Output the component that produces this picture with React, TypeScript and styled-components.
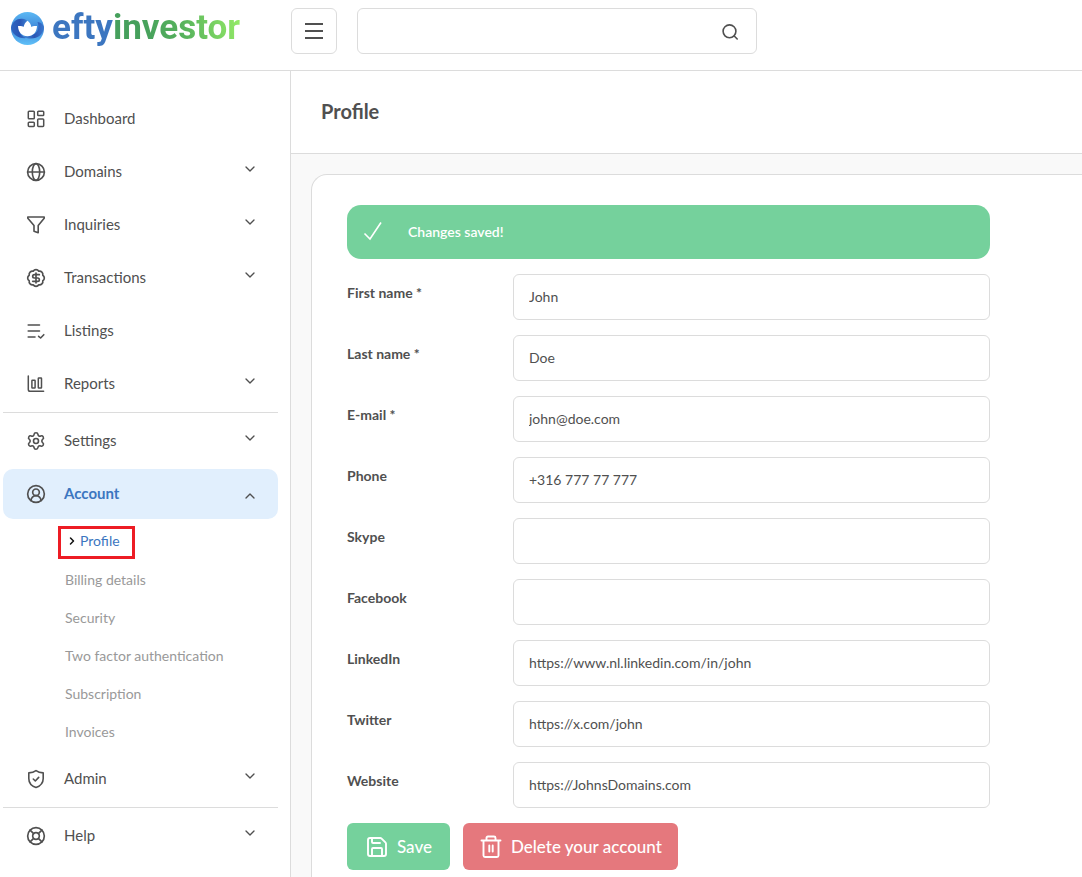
import React from 'react';
import styled, { createGlobalStyle, css } from 'styled-components';
import {
  BadgeDollarSign,
  ChevronDown,
  ChevronRight,
  ChevronUp,
  CircleUserRound,
  LifeBuoy,
  Save,
  Settings,
} from 'lucide-react';

const colors = {
  text: '#505050',
  muted: '#999999',
  line: '#dcdcdc',
  blue: '#3c76c0',
  green: '#75d19c',
  red: '#e5787d',
};

const GlobalStyle = createGlobalStyle`
  *, *::before, *::after { box-sizing: border-box; }
  body {
    margin: 0;
    background: #fff;
    color: ${colors.text};
    font-family: Lato, 'Open Sans', sans-serif;
    font-size: 14px;
    line-height: 20px;
  }
  a { color: inherit; text-decoration: none; }
  ul { list-style: none; margin: 0; padding: 0; }
  button, input { font: inherit; color: inherit; }
  svg { display: block; flex: none; }
`;

const Page = styled.div`
  display: flex;
  flex-direction: column;
  min-height: 100vh;
`;

const Header = styled.header`
  display: flex;
  align-items: flex-start;
  height: 71px;
  padding-top: 8px;
  border-bottom: 1px solid ${colors.line};
`;

const LogoLink = styled.a`
  display: flex;
  align-items: center;
  gap: 8px;
  flex: 0 0 291px;
  height: 40px;
  padding-left: 11px;
`;

const LogoText = styled.span`
  font-family: Roboto, sans-serif;
  font-size: 35px;
  font-weight: 700;
  line-height: 40px;
`;

const LogoPart = styled.span<{ $fill: string }>`
  background: ${(p) => p.$fill};
  background-clip: text;
  -webkit-background-clip: text;
  color: transparent;
`;

const MenuButton = styled.button`
  display: flex;
  align-items: center;
  justify-content: center;
  width: 46px;
  height: 46px;
  padding: 0;
  background: #fff;
  border: 1px solid ${colors.line};
  border-radius: 6px;
`;

const SearchBox = styled.form`
  display: flex;
  align-items: center;
  flex: 0 1 400px;
  height: 46px;
  margin-left: 20px;
  border: 1px solid ${colors.line};
  border-radius: 6px;
`;

const SearchInput = styled.input`
  flex: 1;
  min-width: 0;
  height: 44px;
  padding: 0 15px;
  border: 0;
  background: none;
  outline: none;
`;

const SearchButton = styled.button`
  padding: 1px 17px 0;
  border: 0;
  background: none;
`;

const Body = styled.div`
  display: flex;
  flex: 1;
`;

const Sidebar = styled.nav`
  flex: 0 0 291px;
  padding: 23px 12px 0 3px;
  border-right: 1px solid ${colors.line};
`;

const NavGroup = styled.ul`
  display: flex;
  flex-direction: column;
  gap: 3px;

  & + & {
    margin-top: 3px;
    padding-top: 3px;
    border-top: 1px solid ${colors.line};
  }
`;

const NavLink = styled.a<{ $active?: boolean }>`
  display: flex;
  align-items: center;
  height: 50px;
  padding: 0 20px 0 22px;
  border-radius: 10px;
  font-size: 15px;

  ${(p) =>
    p.$active &&
    css`
      background: #e1effd;
    `}
`;

const IconSlot = styled.span`
  display: flex;
  justify-content: center;
  width: 22px;
`;

const NavLabel = styled.span<{ $active?: boolean }>`
  flex: 1;
  padding: 0 0 2px 17px;
  color: ${(p) => (p.$active ? colors.blue : 'inherit')};
  font-weight: ${(p) => (p.$active ? 700 : 400)};
`;

const Caret = styled.span<{ $open?: boolean }>`
  padding: ${(p) => (p.$open ? '4px 0 0' : '0 0 6px')};
`;

const SubMenu = styled.ul`
  padding: 4px 0 0 55px;
`;

const SubItem = styled.li`
  display: flex;
  align-items: center;
  height: 38px;
`;

const SubLink = styled.a`
  padding-left: 7px;
  color: ${colors.muted};
`;

const CurrentLink = styled.a`
  display: flex;
  align-items: center;
  gap: 2px;
  height: 33px;
  padding: 0 12px 2px 5px;
  border: 3px solid #ed1c24;
  color: ${colors.blue};
`;

const Main = styled.main`
  display: flex;
  flex-direction: column;
  flex: 1;
  min-width: 0;
  background: #f9f9f9;
`;

const TitleBar = styled.div`
  padding: 28px 30px 30px;
  background: #fff;
  border-bottom: 1px solid ${colors.line};
`;

const Title = styled.h1`
  margin: 0;
  font-size: 20px;
  font-weight: 700;
  line-height: 24px;
`;

const Card = styled.section`
  flex: 1;
  margin: 20px 0 0 20px;
  padding: 30px 35px 7px;
  background: #fff;
  border: solid ${colors.line};
  border-width: 1px 0 0 1px;
  border-radius: 16px 0 0 0;
`;

const Form = styled.form`
  display: flex;
  flex-direction: column;
  gap: 15px;
  max-width: 643px;
`;

const Alert = styled.div`
  display: flex;
  align-items: center;
  gap: 25px;
  height: 54px;
  padding: 0 16px;
  border-radius: 14px;
  background: ${colors.green};
  color: #fff;
  font-weight: 600;
`;

const Field = styled.div`
  display: flex;
  align-items: flex-start;
`;

const Label = styled.label`
  flex: 0 0 166px;
  padding-top: 9px;
  font-weight: 700;
`;

const TextInput = styled.input`
  flex: 1;
  min-width: 0;
  height: 46px;
  padding: 0 15px 2px;
  background: #fff;
  border: 1px solid ${colors.line};
  border-radius: 6px;
`;

const Actions = styled.div`
  display: flex;
  gap: 13px;
`;

const ActionButton = styled.button<{ $color: string }>`
  display: flex;
  align-items: center;
  justify-content: center;
  gap: 8px;
  min-width: 103px;
  height: 47px;
  padding: 0 16px;
  border: 0;
  border-radius: 6px;
  background: ${(p) => p.$color};
  color: #fff;
  font-size: 17px;
  font-weight: 500;
`;

const line = {
  fill: 'none',
  stroke: 'currentColor',
  strokeWidth: 1.6,
  strokeLinecap: 'round' as const,
  strokeLinejoin: 'round' as const,
};

const LogoMark = () => (
  <svg width="33" height="33" viewBox="0 0 33 33" aria-hidden="true">
    <defs>
      <linearGradient id="ball" x1="0" y1="0" x2="0" y2="1">
        <stop offset="0" stopColor="#5cb9f4" />
        <stop offset="0.5" stopColor="#3f86d8" />
        <stop offset="1" stopColor="#5fc0f8" />
      </linearGradient>
      <linearGradient id="swirlLeft" x1="0" y1="0" x2="1" y2="0">
        <stop offset="0" stopColor="#2f66c2" />
        <stop offset="0.5" stopColor="#2a56b4" />
        <stop offset="1" stopColor="#3f86d8" />
      </linearGradient>
      <linearGradient id="swirlRight" x1="0" y1="0" x2="1" y2="0">
        <stop offset="0" stopColor="#4a9fe6" />
        <stop offset="0.6" stopColor="#2a56b4" />
        <stop offset="1" stopColor="#3a78cf" />
      </linearGradient>
    </defs>
    <circle cx="16.5" cy="16.5" r="16.5" fill="url(#ball)" />
    <path d="M0 15.500C1.500 9.500 6 6.500 11 6.800c3 .2 5 1.500 6.500 3.700L9 17c0 4 3 7.500 7 9C8 27 1 23 0 15.500z" fill="url(#swirlLeft)" />
    <path d="M33 15c-.500 7-6 11.500-13 11.500-5 0-9-2-11-6 4 3.500 10 4.500 15 1 4-2.800 4-8 2.500-11.500 3 .500 5.500 2 6.500 5z" fill="url(#swirlRight)" />
    <path d="M16.500 8.800c2.200 1.700 3.500 3.800 3.800 6.200 1.300-1 3-1.200 5.700-1-.2 6-4 10.300-9.500 10.300S7.200 20 7 14c2.700-.2 4.400 0 5.700 1 .3-2.400 1.600-4.500 3.800-6.200z" fill="#fff" />
  </svg>
);

const MenuIcon = () => (
  <svg width="18" height="18" viewBox="0 0 18 18" aria-hidden="true">
    <path d="M0 2h18M0 9h18M0 16h18" {...line} strokeWidth="1.8" strokeLinecap="butt" />
  </svg>
);

const SearchIcon = () => (
  <svg width="18" height="18" viewBox="0 0 18 18" aria-hidden="true">
    <circle cx="8.500" cy="8.300" r="6.400" {...line} />
    <path d="M13.200 13l3 3" {...line} />
  </svg>
);

const DashboardIcon = () => (
  <svg width="20" height="20" viewBox="0 0 20 20" aria-hidden="true">
    <g {...line} strokeWidth="1.500">
      <rect x="2.300" y="2.300" width="6" height="7.500" rx="0.800" />
      <rect x="11.700" y="2.300" width="6" height="4.200" rx="0.800" />
      <rect x="2.300" y="13.200" width="6" height="4.200" rx="0.800" />
      <rect x="11.700" y="9.900" width="6" height="7.500" rx="0.800" />
    </g>
  </svg>
);

const GlobeIcon = () => (
  <svg width="20" height="20" viewBox="0 0 20 20" aria-hidden="true">
    <g {...line}>
      <circle cx="10" cy="10" r="8.400" />
      <ellipse cx="10" cy="10" rx="3.700" ry="8.400" />
      <path d="M1.600 10h16.800" />
    </g>
  </svg>
);

const FunnelIcon = () => (
  <svg width="20" height="20" viewBox="0 0 20 20" aria-hidden="true">
    <path d="M1.800 2h16.400v1.200l-6 7.300v7.300l-4.200-1.600v-5.700L1.800 3.200z" {...line} />
  </svg>
);

const ListIcon = () => (
  <svg width="20" height="20" viewBox="0 0 20 20" aria-hidden="true">
    <path d="M2.200 4h11.300M2.200 10h11.300M2.200 16h6.800M12.600 15.300l2 1.700 3.200-3.300" {...line} />
  </svg>
);

const ReportIcon = () => (
  <svg width="20" height="20" viewBox="0 0 20 20" aria-hidden="true">
    <g {...line} strokeWidth="1.500">
      <path d="M2.300 2v13.500q0 1.800 1.800 1.800h13.500" />
      <rect x="5.900" y="6.300" width="3.200" height="7.800" rx="0.500" />
      <rect x="12.300" y="4" width="3.200" height="10.100" rx="0.500" />
    </g>
  </svg>
);

const ShieldIcon = () => (
  <svg width="20" height="20" viewBox="0 0 20 20" aria-hidden="true">
    <path d="M10 1.600c2 1.500 4.500 2.200 7.200 2.300v5.600c0 4.300-2.800 7.500-7.200 9-4.400-1.500-7.200-4.700-7.200-9V3.900C5.500 3.800 8 3.100 10 1.600zM7.300 10l2 2 3.400-3.600" {...line} />
  </svg>
);

const TickIcon = () => (
  <svg width="20" height="20" viewBox="0 0 20 20" aria-hidden="true">
    <path d="M1.500 11.500L7 17 18 .500" {...line} strokeLinecap="butt" strokeLinejoin="miter" />
  </svg>
);

const TrashIcon = () => (
  <svg width="24" height="24" viewBox="0 0 24 24" aria-hidden="true">
    <path d="M2.500 5.500h19M4.500 5.500v15q0 1.500 1.500 1.500h12q1.500 0 1.500-1.500v-15M7.500 5.500v-2.500q0-1.500 1.500-1.500h6q1.500 0 1.500 1.500v2.500M10.300 10.500v6M13.700 10.500v6" {...line} strokeWidth="1.900" />
  </svg>
);

type Item = { label: string; icon: React.ReactNode; expands?: boolean; children?: string[] };

const groups: Item[][] = [
  [
    { label: 'Dashboard', icon: <DashboardIcon /> },
    { label: 'Domains', icon: <GlobeIcon />, expands: true },
    { label: 'Inquiries', icon: <FunnelIcon />, expands: true },
    { label: 'Transactions', icon: <BadgeDollarSign size={20} strokeWidth={2} />, expands: true },
    { label: 'Listings', icon: <ListIcon /> },
    { label: 'Reports', icon: <ReportIcon />, expands: true },
  ],
  [
    { label: 'Settings', icon: <Settings size={20} strokeWidth={1.9} />, expands: true },
    {
      label: 'Account',
      icon: <CircleUserRound size={20} strokeWidth={2} />,
      expands: true,
      children: ['Profile', 'Billing details', 'Security', 'Two factor authentication', 'Subscription', 'Invoices'],
    },
    { label: 'Admin', icon: <ShieldIcon />, expands: true },
  ],
  [{ label: 'Help', icon: <LifeBuoy size={20} strokeWidth={2} />, expands: true }],
];

const fields = [
  { id: 'first-name', label: 'First name *', value: 'John' },
  { id: 'last-name', label: 'Last name *', value: 'Doe' },
  { id: 'email', label: 'E-mail *', value: 'john@doe.com' },
  { id: 'phone', label: 'Phone', value: '+316 777 77 777' },
  { id: 'skype', label: 'Skype', value: '' },
  { id: 'facebook', label: 'Facebook', value: '' },
  { id: 'linkedin', label: 'LinkedIn', value: 'https://www.nl.linkedin.com/in/john' },
  { id: 'twitter', label: 'Twitter', value: 'https://x.com/john' },
  { id: 'website', label: 'Website', value: 'https://JohnsDomains.com' },
];

const NavEntry = ({ item }: { item: Item }) => {
  const open = Boolean(item.children);
  return (
    <li>
      <NavLink href="#" $active={open}>
        <IconSlot>{item.icon}</IconSlot>
        <NavLabel $active={open}>{item.label}</NavLabel>
        {item.expands && (
          <Caret $open={open}>{open ? <ChevronUp size={16} /> : <ChevronDown size={16} />}</Caret>
        )}
      </NavLink>
      {item.children && (
        <SubMenu>
          {item.children.map((name, i) => (
            <SubItem key={name}>
              {i === 0 ? (
                <CurrentLink href="#" aria-current="page">
                  <ChevronRight size={12} color="#111" strokeWidth={3} />
                  {name}
                </CurrentLink>
              ) : (
                <SubLink href="#">{name}</SubLink>
              )}
            </SubItem>
          ))}
        </SubMenu>
      )}
    </li>
  );
};

export default function App() {
  return (
    <Page>
      <GlobalStyle />
      <Header>
        <LogoLink href="#">
          <LogoMark />
          <LogoText>
            <LogoPart $fill="#3c76c0">efty</LogoPart>
            <LogoPart $fill="linear-gradient(75deg, #46a05c 25%, #57b35c 55%, #98ee68)">investor</LogoPart>
          </LogoText>
        </LogoLink>
        <MenuButton type="button" aria-label="Toggle menu">
          <MenuIcon />
        </MenuButton>
        <SearchBox role="search">
          <SearchInput type="text" aria-label="Search" />
          <SearchButton type="submit" aria-label="Search">
            <SearchIcon />
          </SearchButton>
        </SearchBox>
      </Header>
      <Body>
        <Sidebar>
          {groups.map((items) => (
            <NavGroup key={items[0].label}>
              {items.map((item) => (
                <NavEntry key={item.label} item={item} />
              ))}
            </NavGroup>
          ))}
        </Sidebar>
        <Main>
          <TitleBar>
            <Title>Profile</Title>
          </TitleBar>
          <Card>
            <Form>
              <Alert role="status">
                <TickIcon />
                Changes saved!
              </Alert>
              {fields.map((f) => (
                <Field key={f.id}>
                  <Label htmlFor={f.id}>{f.label}</Label>
                  <TextInput id={f.id} type="text" defaultValue={f.value} />
                </Field>
              ))}
              <Actions>
                <ActionButton type="submit" $color={colors.green}>
                  <Save size={24} strokeWidth={1.9} />
                  Save
                </ActionButton>
                <ActionButton type="button" $color={colors.red}>
                  <TrashIcon />
                  Delete your account
                </ActionButton>
              </Actions>
            </Form>
          </Card>
        </Main>
      </Body>
    </Page>
  );
}
